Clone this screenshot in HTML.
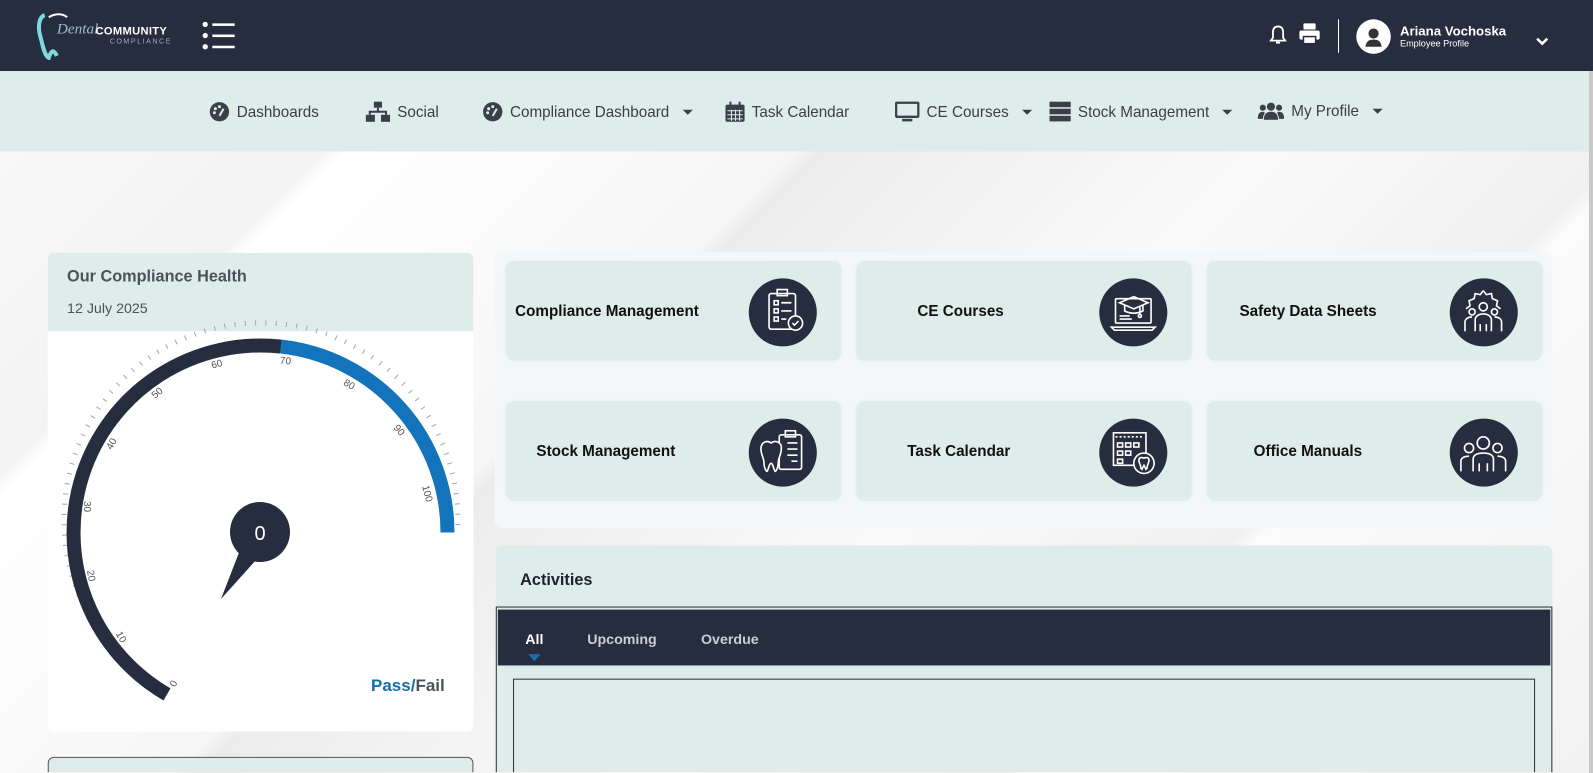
<!DOCTYPE html>
<html style="width:1593px;height:773px;overflow:hidden"><head><meta charset="utf-8"><style>
*{box-sizing:border-box;margin:0;padding:0}
body{width:1593px;height:773px;overflow:hidden;font-family:"Liberation Sans",sans-serif;position:relative;
background:linear-gradient(135deg,#fafafa 0%,#f3f3f3 20%,#fff 21%,#f6f6f6 40%,#ececec 41%,#fafafa 60%,#f0f0f0 75%,#fbfbfb 76%,#f2f2f2 100%)}
#w{position:absolute;left:0;top:0;width:1568px;height:760px;overflow:hidden;transform:scale(1.01594);transform-origin:0 0}
.hdr{position:absolute;left:0;top:0;width:1568px;height:70px;background:#262d3e}
.nav{position:absolute;left:0;top:70px;width:1568px;height:79px;background:#deecea}
.nav div{position:absolute;top:30px;font-size:15px;color:#3a3f48;display:flex;align-items:center;gap:7px;white-space:nowrap}
.nav svg{fill:#3a3f48}
.car{display:inline-block;border-left:5px solid transparent;border-right:5px solid transparent;border-top:5px solid #3a3f48;margin-left:6px}
.a{position:absolute}
.card{position:absolute;background:#deecea;border-radius:8px;width:330px;height:98px;box-shadow:0 0 4px rgba(0,0,0,.04)}
.card span{position:absolute;top:41px;font-weight:bold;font-size:15px;color:#111}
.ic{position:absolute;left:239px;top:17px;width:67px;height:67px;border-radius:50%;background:#262d3e}
.ic svg{width:67px;height:67px;stroke:#fff;fill:none;stroke-width:1.6}
</style></head><body>
<div id="w">
<div class="hdr">
 <svg class="a" style="left:36px;top:11px" width="32" height="48" viewBox="0 0 32 48"><path d="M8 4C2 6 1 16 4 26 6 34 8 44 12 46 14 40 16 36 20 44" stroke="#7fd8de" stroke-width="4" fill="none"/><path d="M12 6C18 2 26 2 30 6" stroke="#fff" stroke-width="2" fill="none"/></svg>
 <div class="a" style="left:56px;top:21px;color:#9fb9d6;font-style:italic;font-family:'Liberation Serif',serif;font-size:15px">Dental</div>
 <div class="a" style="left:94px;top:25px;color:#fff;font-weight:bold;font-size:11px;letter-spacing:.3px">COMMUNITY</div>
 <div class="a" style="left:108px;top:38px;color:#aab;font-size:7px;letter-spacing:1.5px">COMPLIANCE</div>
 <svg class="a" style="left:199px;top:21px" width="34" height="28"><circle cx="3" cy="3" r="2.6" fill="#fff"/><circle cx="3" cy="14" r="2.6" fill="#fff"/><circle cx="3" cy="25" r="2.6" fill="#fff"/><rect x="10" y="2" width="22" height="2.5" fill="#fff"/><rect x="10" y="13" width="22" height="2.5" fill="#fff"/><rect x="10" y="24" width="22" height="2.5" fill="#fff"/></svg>
 <svg class="a" style="left:1249px;top:24px" width="18" height="20" viewBox="0 0 18 20"><path d="M9 2C5 2 4 5 4 8v5l-2 3h14l-2-3V8c0-3-1-6-5-6z" stroke="#fff" stroke-width="1.8" fill="none"/><path d="M7 18h4" stroke="#fff" stroke-width="2"/></svg>
 <svg class="a" style="left:1278px;top:22px" width="22" height="22" viewBox="0 0 22 22" fill="#fff"><rect x="5" y="1" width="12" height="6" rx="1"/><rect x="1" y="8" width="20" height="9" rx="2"/><rect x="5" y="14" width="12" height="7" fill="#fff" stroke="#262d3e" stroke-width="1.5"/></svg>
 <div class="a" style="left:1317px;top:19px;width:1px;height:33px;background:#fff"></div>
 <div class="a" style="left:1335px;top:19px;width:34px;height:34px;border-radius:50%;background:#fff"><svg width="34" height="34"><circle cx="17" cy="14" r="5" fill="#333"/><path d="M9 27c1-6 4-7 8-7s7 1 8 7z" fill="#333"/></svg></div>
 <div class="a" style="left:1378px;top:23px;color:#fff;font-weight:bold;font-size:13px">Ariana Vochoska</div>
 <div class="a" style="left:1378px;top:38px;color:#fff;font-size:9px">Employee Profile</div>
 <svg class="a" style="left:1511px;top:36px" width="14" height="10"><path d="M2 2l5 5 5-5" stroke="#fff" stroke-width="2.5" fill="none"/></svg>
</div>
<div class="nav">
 <div style="left:206px"><svg width="20" height="20" viewBox="0 0 20 20"><circle cx="10" cy="10" r="9.5"/><circle cx="6" cy="7" r="1.5" fill="#deecea"/><circle cx="10" cy="5" r="1.5" fill="#deecea"/><circle cx="5" cy="11" r="1.5" fill="#deecea"/><path d="M10 14l4-7" stroke="#deecea" stroke-width="2"/></svg>Dashboards</div>
 <div style="left:360px"><svg width="24" height="20" viewBox="0 0 24 20"><rect x="8" y="0" width="8" height="6"/><rect x="0" y="13" width="9" height="7"/><rect x="15" y="13" width="9" height="7"/><path d="M12 6v4M4 13v-3h16v3" stroke="#3a3f48" stroke-width="2" fill="none"/></svg>Social</div>
 <div style="left:475px"><svg width="20" height="20" viewBox="0 0 20 20"><circle cx="10" cy="10" r="9.5"/><circle cx="6" cy="7" r="1.5" fill="#deecea"/><circle cx="10" cy="5" r="1.5" fill="#deecea"/><circle cx="5" cy="11" r="1.5" fill="#deecea"/><path d="M10 14l4-7" stroke="#deecea" stroke-width="2"/></svg>Compliance Dashboard<i class="car"></i></div>
 <div style="left:714px"><svg width="19" height="20" viewBox="0 0 19 20"><rect x="0" y="3" width="19" height="17" rx="2"/><rect x="4" y="0" width="2" height="5"/><rect x="13" y="0" width="2" height="5"/><path d="M2 9h15M2 13h15M2 17h15M6 8v11M10 8v11M14 8v11" stroke="#deecea" stroke-width="1"/></svg>Task Calendar</div>
 <div style="left:881px"><svg width="24" height="20" viewBox="0 0 24 20"><rect x="1" y="1" width="22" height="14" rx="1" fill="none" stroke="#3a3f48" stroke-width="2.4"/><rect x="7" y="17" width="10" height="2.5"/></svg>CE Courses<i class="car"></i></div>
 <div style="left:1033px"><svg width="21" height="20" viewBox="0 0 21 20"><rect x="0" y="0" width="21" height="5.5"/><rect x="0" y="7" width="21" height="5.5"/><rect x="0" y="14" width="21" height="5.5"/></svg>Stock Management<i class="car"></i></div>
 <div style="left:1238px"><svg width="26" height="18" viewBox="0 0 26 18"><circle cx="13" cy="5" r="4"/><circle cx="5" cy="6" r="3"/><circle cx="21" cy="6" r="3"/><path d="M6 18c0-6 3-8 7-8s7 2 7 8zM0 17c0-5 2-7 5-7 1 0 2 1 2 1-1 2-2 4-2 6zM26 17c0-5-2-7-5-7-1 0-2 1-2 1 1 2 2 4 2 6z"/></svg>My Profile<i class="car"></i></div>
</div>

<div class="a" style="left:47px;top:249px;width:419px;height:471px;background:#fff;border-radius:6px;overflow:hidden">
 <div style="height:77px;background:#deecea;padding:15px 19px">
  <div style="font-weight:bold;font-size:16px;color:#4a5358">Our Compliance Health</div>
  <div style="font-size:14px;color:#4a5358;margin-top:13px">12 July 2025</div>
 </div>
</div>
<div class="a" style="left:47px;top:745px;width:419px;height:40px;background:#deecea;border:1.5px solid #555;border-radius:6px"></div>

<div class="a" style="left:487px;top:248px;width:1041px;height:272px;background:#f3f7f9;border-radius:8px"></div>
<div class="card" style="left:498px;top:257px"><span style="left:9px">Compliance Management</span><div class="ic"><svg viewBox="0 0 67 67"><rect x="20" y="15" width="26" height="35" rx="2"/><rect x="28" y="11" width="10" height="6"/><rect x="25" y="22" width="4" height="4"/><rect x="25" y="30" width="4" height="4"/><rect x="25" y="38" width="4" height="4"/><path d="M32 24h10M32 32h10M32 40h5"/><circle cx="46" cy="44" r="7" fill="#262d3e"/><path d="M43 44l2 2 4-4"/></svg></div></div>
<div class="card" style="left:843px;top:257px"><span style="left:60px">CE Courses</span><div class="ic"><svg viewBox="0 0 67 67"><rect x="16" y="20" width="35" height="24" rx="1"/><path d="M12 48h43l-3 3H15z"/><path d="M20 24l14-6 14 6-14 6z"/><path d="M25 26v6c5 3 13 3 18 0v-6M40 27v8"/><circle cx="40" cy="37" r="1.5"/><path d="M20 37h10M20 40h12"/></svg></div></div>
<div class="card" style="left:1188px;top:257px"><span style="left:32px">Safety Data Sheets</span><div class="ic"><svg viewBox="0 0 67 67"><path d="M33 12l3 4 5-1 1 5 5 2-1 5 4 3M33 12l-3 4-5-1-1 5-5 2 1 5-4 3"/><circle cx="33" cy="28" r="4"/><circle cx="22" cy="33" r="3"/><circle cx="44" cy="33" r="3"/><path d="M25 52V41c0-4 4-6 8-6s8 2 8 6v11M15 52V43c0-3 3-5 7-5M51 52V43c0-3-3-5-7-5M30 45v7M36 45v7"/></svg></div></div>
<div class="card" style="left:498px;top:395px"><span style="left:30px">Stock Management</span><div class="ic"><svg viewBox="0 0 67 67"><rect x="30" y="16" width="22" height="34" rx="2"/><rect x="36" y="12" width="10" height="6"/><path d="M38 24h10M38 30h10M38 36h10M42 42h6"/><path d="M12 30c0-7 6-9 10-6 4-3 11-1 10 6 0 6-3 8-3 14 0 4-2 8-3 8s-2-8-4-8-3 8-4 8-3-4-3-8c0-6-3-8-3-14z" fill="#262d3e"/></svg></div></div>
<div class="card" style="left:843px;top:395px"><span style="left:50px">Task Calendar</span><div class="ic"><svg viewBox="0 0 67 67"><rect x="14" y="14" width="32" height="32"/><path d="M16 18h28" stroke-dasharray="2 2"/><rect x="18" y="24" width="5" height="4"/><rect x="26" y="24" width="5" height="4"/><rect x="34" y="24" width="5" height="4"/><rect x="18" y="32" width="5" height="4"/><rect x="26" y="32" width="5" height="4"/><rect x="18" y="40" width="5" height="4"/><circle cx="44" cy="44" r="10" fill="#262d3e"/><path d="M39 41c0-3 3-3 5-2 2-1 5-1 5 2 0 3-2 4-2 8l-1 1-2-4-2 4-1-1c0-4-2-5-2-8z"/></svg></div></div>
<div class="card" style="left:1188px;top:395px"><span style="left:46px">Office Manuals</span><div class="ic"><svg viewBox="0 0 67 67"><circle cx="33" cy="24" r="6"/><circle cx="19" cy="29" r="4.5"/><circle cx="47" cy="29" r="4.5"/><path d="M23 52V40c0-4 4-6 10-6s10 2 10 6v12M11 52V42c0-3 3-5 8-5M55 52V42c0-3-3-5-8-5M29 44v8M37 44v8"/></svg></div></div>

<div class="a" style="left:488px;top:537px;width:1040px;height:260px;background:#deecea;border-radius:6px 6px 0 0"></div>
<div class="a" style="left:512px;top:563px;font-weight:bold;font-size:16px;color:#1d222b">Activities</div>
<div class="a" style="left:488px;top:597px;width:1040px;height:200px;border:1.5px solid #2a2f3a"></div>
<div class="a" style="left:490px;top:600px;width:1036px;height:55px;background:#262d3e"></div>
<div class="a" style="left:517px;top:621px;font-weight:bold;font-size:14px;color:#fff">All</div>
<div class="a" style="left:520px;top:644px;border-left:6px solid transparent;border-right:6px solid transparent;border-top:7px solid #1b6fb0"></div>
<div class="a" style="left:578px;top:621px;font-weight:bold;font-size:14px;color:#c9cdd4">Upcoming</div>
<div class="a" style="left:690px;top:621px;font-weight:bold;font-size:14px;color:#c9cdd4">Overdue</div>
<div class="a" style="left:505px;top:668px;width:1006px;height:140px;border:1.5px solid #2a2f3a"></div>
</div>
<div class="a" style="left:1589px;top:71px;width:4px;height:702px;background:#c9c9c9"></div>

<svg class="a" style="left:0;top:0" width="480" height="773">
 <path d="M167 693 A197 197 0 1 1 457.5 532.5" stroke="#9aa" stroke-width="5" stroke-dasharray="1 9.3" fill="none"/>
 <path d="M167 694.4 A187 187 0 0 1 281 346.6" stroke="#262d3e" stroke-width="14" fill="none"/>
 <path d="M281 346.6 A187 187 0 0 1 447.5 532.5" stroke="#1373bb" stroke-width="14" fill="none"/>
 <g font-size="10" fill="#555" font-family="Liberation Sans">
  <text x="170" y="687" transform="rotate(-60 173 683)">0</text>
  <text x="116" y="641" transform="rotate(60 122 637)">10</text>
  <text x="86" y="580" transform="rotate(80 92 576)">20</text>
  <text x="82" y="511" transform="rotate(90 88 507)">30</text>
  <text x="105" y="447" transform="rotate(-60 111 443)">40</text>
  <text x="151" y="396" transform="rotate(-40 157 392)">50</text>
  <text x="211" y="367" transform="rotate(-15 218 363)">60</text>
  <text x="280" y="364" transform="rotate(5 286 360)">70</text>
  <text x="344" y="388" transform="rotate(30 350 384)">80</text>
  <text x="394" y="434" transform="rotate(50 400 430)">90</text>
  <text x="420" y="497" transform="rotate(75 428 493)">100</text>
 </g>
 <circle cx="260" cy="532" r="30" fill="#262d3e"/>
 <path d="M240 550 L221 599 L256 560z" fill="#262d3e"/>
 <text x="260" y="540" text-anchor="middle" font-size="20" fill="#fff" font-family="Liberation Sans">0</text>
 <text x="371" y="691" font-size="17" font-weight="bold" fill="#1a6ea8" font-family="Liberation Sans">Pass/<tspan fill="#4a5358">Fail</tspan></text>
</svg>
</body></html>
